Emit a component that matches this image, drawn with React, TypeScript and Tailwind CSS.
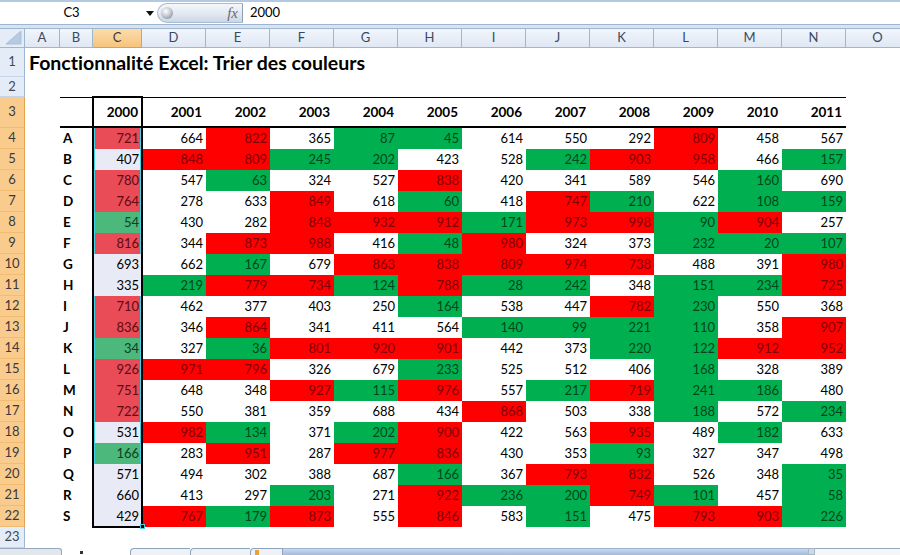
import React from 'react';

type Row = { label: string; v: number[] };

const data: Row[] = [
  { label: 'A', v: [721, 664, 822, 365, 87, 45, 614, 550, 292, 809, 458, 567] },
  { label: 'B', v: [407, 848, 809, 245, 202, 423, 528, 242, 903, 958, 466, 157] },
  { label: 'C', v: [780, 547, 63, 324, 527, 838, 420, 341, 589, 546, 160, 690] },
  { label: 'D', v: [764, 278, 633, 849, 618, 60, 418, 747, 210, 622, 108, 159] },
  { label: 'E', v: [54, 430, 282, 848, 932, 912, 171, 973, 998, 90, 904, 257] },
  { label: 'F', v: [816, 344, 873, 988, 416, 48, 980, 324, 373, 232, 20, 107] },
  { label: 'G', v: [693, 662, 167, 679, 863, 838, 809, 974, 738, 488, 391, 980] },
  { label: 'H', v: [335, 219, 779, 734, 124, 788, 28, 242, 348, 151, 234, 725] },
  { label: 'I', v: [710, 462, 377, 403, 250, 164, 538, 447, 782, 230, 550, 368] },
  { label: 'J', v: [836, 346, 864, 341, 411, 564, 140, 99, 221, 110, 358, 907] },
  { label: 'K', v: [34, 327, 36, 801, 920, 901, 442, 373, 220, 122, 912, 952] },
  { label: 'L', v: [926, 971, 796, 326, 679, 233, 525, 512, 406, 168, 328, 389] },
  { label: 'M', v: [751, 648, 348, 927, 115, 976, 557, 217, 719, 241, 186, 480] },
  { label: 'N', v: [722, 550, 381, 359, 688, 434, 868, 503, 338, 188, 572, 234] },
  { label: 'O', v: [531, 982, 134, 371, 202, 900, 422, 563, 935, 489, 182, 633] },
  { label: 'P', v: [166, 283, 951, 287, 977, 836, 430, 353, 93, 327, 347, 498] },
  { label: 'Q', v: [571, 494, 302, 388, 687, 166, 367, 793, 832, 526, 348, 35] },
  { label: 'R', v: [660, 413, 297, 203, 271, 922, 236, 200, 749, 101, 457, 58] },
  { label: 'S', v: [429, 767, 179, 873, 555, 846, 583, 151, 475, 793, 903, 226] },
];

const years = [2000, 2001, 2002, 2003, 2004, 2005, 2006, 2007, 2008, 2009, 2010, 2011];
const letters = ['D', 'E', 'F', 'G', 'H', 'I', 'J', 'K', 'L', 'M', 'N', 'O'];

function RowHeader({ n, sel }: { n: number; sel?: boolean }) {
  return (
    <div
      className={`w-[25px] shrink-0 h-full flex items-center justify-center text-[13px] border-r border-b ${
        sel
          ? 'bg-[#f9cc8e] border-r-[#e2a24e] border-b-[#f1bd70] text-[#3a3a3a]'
          : 'bg-[#e4ecf7] border-r-[#9eb6ce] border-b-[#c5d4e6] text-[#3a4a5e]'
      }`}
    >
      {n}
    </div>
  );
}

function Cell({ v, sel, cyan }: { v: number; sel: boolean; cyan: boolean }) {
  const kind = v > 700 ? 'r' : v < 250 ? 'g' : 'w';
  let cls = '';
  if (sel) {
    cls =
      kind === 'r'
        ? 'bg-[#e94b57] text-[#5e0a12]'
        : kind === 'g'
        ? 'bg-[#4cb87b] text-[#0b3f1f]'
        : 'bg-[#e8ebf5] text-black';
    cls += ' w-[49px]';
    if (cyan) cls += ' shadow-[inset_2px_0_0_#3fd2e4,inset_-2px_0_0_#3fd2e4]';
  } else {
    cls =
      kind === 'r'
        ? 'bg-[#ff0000] text-[#7e0006]'
        : kind === 'g'
        ? 'bg-[#00b050] text-[#00461a]'
        : 'text-black';
    cls += ' w-[64px]';
  }
  return <div className={`shrink-0 h-full flex items-center justify-end pr-[3px] ${cls}`}>{v}</div>;
}

function FormulaBar() {
  return (
    <div className="h-[25px] flex border-t-2 border-t-[#b3c8e3] border-b border-b-[#9fb4cf] bg-white text-[13px] text-black">
      <div className="w-[143px] flex items-center justify-center">C3</div>
      <div className="w-[14px] flex items-center justify-center">
        <svg width="8" height="5" viewBox="0 0 8 5">
          <polygon points="0,0 8,0 4,5" fill="#111" />
        </svg>
      </div>
      <div className="w-[86px] my-[1px] rounded-l-full border border-[#a9bbd2] border-r-[#8e9fb5] bg-linear-to-b from-[#f4f7fb] via-[#e3eaf3] to-[#cbd7e6] flex items-center justify-between pl-[2px] pr-[4px]">
        <svg width="14" height="14" viewBox="0 0 14 14">
          <defs>
            <radialGradient id="ball" cx="0.4" cy="0.35" r="0.7">
              <stop offset="0" stopColor="#ffffff" />
              <stop offset="0.6" stopColor="#c3c8cf" />
              <stop offset="1" stopColor="#8e959e" />
            </radialGradient>
          </defs>
          <circle cx="7" cy="7" r="6" fill="url(#ball)" />
        </svg>
        <span className="font-['Liberation_Serif'] italic text-[15px] text-[#6a6a6a] leading-none">fx</span>
      </div>
      <div className="flex-1 flex items-center pl-[7px]">2000</div>
    </div>
  );
}

function ColumnHeaders() {
  const base = 'shrink-0 h-full flex items-center justify-center border-r border-b text-[13px]';
  const normal = `${base} bg-linear-to-b from-[#f1f5fb] to-[#e0e8f4] border-r-[#9eb6ce] border-b-[#9eb6ce] text-[#3a4a5e]`;
  const sel = `${base} bg-linear-to-b from-[#fbdcab] to-[#f6c47c] border-r-[#e0a04a] border-b-[#e0a04a] text-[#3a3a3a]`;
  return (
    <div className="h-[20px] flex border-t border-t-[#9eb6ce]">
      <div className="w-[25px] shrink-0 h-full bg-[#e4ecf7] border-r border-b border-[#9eb6ce] flex items-end justify-end">
        <svg width="24" height="19" viewBox="0 0 24 19">
          <polygon points="21,3 21,16 6,16" fill="#b7cae1" stroke="#a9bfd9" strokeWidth="1" />
        </svg>
      </div>
      <div className={`${normal} w-[35px]`}>A</div>
      <div className={`${normal} w-[33px]`}>B</div>
      <div className={`${sel} w-[49px]`}>C</div>
      {letters.map((l) => (
        <div key={l} className={`${normal} w-[64px]`}>
          {l}
        </div>
      ))}
    </div>
  );
}

function TabBar() {
  return (
    <div className="h-[7px] flex">
      <div className="w-[62px] shrink-0 bg-[#e2e7ee] border-t border-r border-[#98a9bf] rounded-tr-[3px]" />
      <div className="w-[68px] shrink-0 bg-white relative">
        <div className="absolute left-[18px] top-[3px] w-[3px] h-[3px] bg-[#333]" />
      </div>
      <div className="w-[60px] shrink-0 bg-[#eef2f7] border-t border-l border-[#8fa3bc] rounded-tl-[4px]" />
      <div className="w-[60px] shrink-0 bg-[#eef2f7] border-t border-l border-[#8fa3bc] rounded-tl-[4px]" />
      <div className="w-[33px] shrink-0 bg-[#eef2f7] border-t border-l border-r border-[#8fa3bc] rounded-tl-[4px] relative">
        <div className="absolute left-[4px] top-[1px] w-[4px] h-[5px] bg-[#e8a23c]" />
      </div>
      <div className="w-[525px] shrink-0 bg-linear-to-b from-[#c9d9ed] to-[#a3bbd9] border-t border-[#9fb5d1]" />
      <div className="w-[7px] shrink-0 bg-[#cfd9e6] border border-[#a7b6c9]" />
      <div className="flex-1 bg-[#f4f6f9] border-t border-[#97a8be]" />
    </div>
  );
}

export default function App() {
  const cyanRows = new Set([0, 1, 2, 3, 4, 5, 8, 9, 10, 11, 12, 13, 14, 15]);
  return (
    <div className="w-[900px] h-[555px] overflow-hidden bg-white flex flex-col font-['Lato'] text-[13px] text-black select-none [font-variant-ligatures:none]">
      <FormulaBar />
      <div className="h-[3px] bg-[#d8e3f1]" />
      <ColumnHeaders />
      <div className="relative flex flex-col">
        {/* Row 1 */}
        <div className="h-[29px] flex">
          <RowHeader n={1} />
          <div className="pl-[4px] flex items-center font-bold text-[19.5px] whitespace-nowrap">
            Fonctionnalité Excel: Trier des couleurs
          </div>
        </div>
        {/* Row 2 */}
        <div className="h-[20px] flex">
          <RowHeader n={2} />
        </div>
        {/* Row 3 - headers */}
        <div className="h-[31px] flex">
          <RowHeader n={3} sel />
          <div className="w-[35px] shrink-0" />
          <div className="w-[33px] shrink-0 h-full border-t border-b-2 border-black" />
          {years.map((y, i) => (
            <div
              key={y}
              className={`${i === 0 ? 'w-[49px] bg-white' : 'w-[64px]'} shrink-0 h-full border-t border-b-2 border-black flex items-center justify-end pr-[4px] font-bold text-[13.5px]`}
            >
              {y}
            </div>
          ))}
        </div>
        {/* Data rows */}
        {data.map((r, ri) => (
          <div key={r.label} className="h-[21px] flex">
            <RowHeader n={ri + 4} sel />
            <div className="w-[35px] shrink-0" />
            <div className="w-[33px] shrink-0 h-full flex items-center pl-[3px] font-bold text-[13.5px]">{r.label}</div>
            {r.v.map((v, ci) => (
              <Cell key={ci} v={v} sel={ci === 0} cyan={ci === 0 && cyanRows.has(ri)} />
            ))}
          </div>
        ))}
        {/* Row 23 */}
        <div className="h-[21px] flex">
          <RowHeader n={23} />
        </div>
        {/* Selection overlay */}
        <div className="absolute left-[92px] top-[48px] w-[51px] h-[432px] border-2 border-black pointer-events-none" />
        <div className="absolute left-[140px] top-[476px] w-[5px] h-[5px] bg-black border border-[#3fd2e4] pointer-events-none" />
      </div>
      <TabBar />
    </div>
  );
}
